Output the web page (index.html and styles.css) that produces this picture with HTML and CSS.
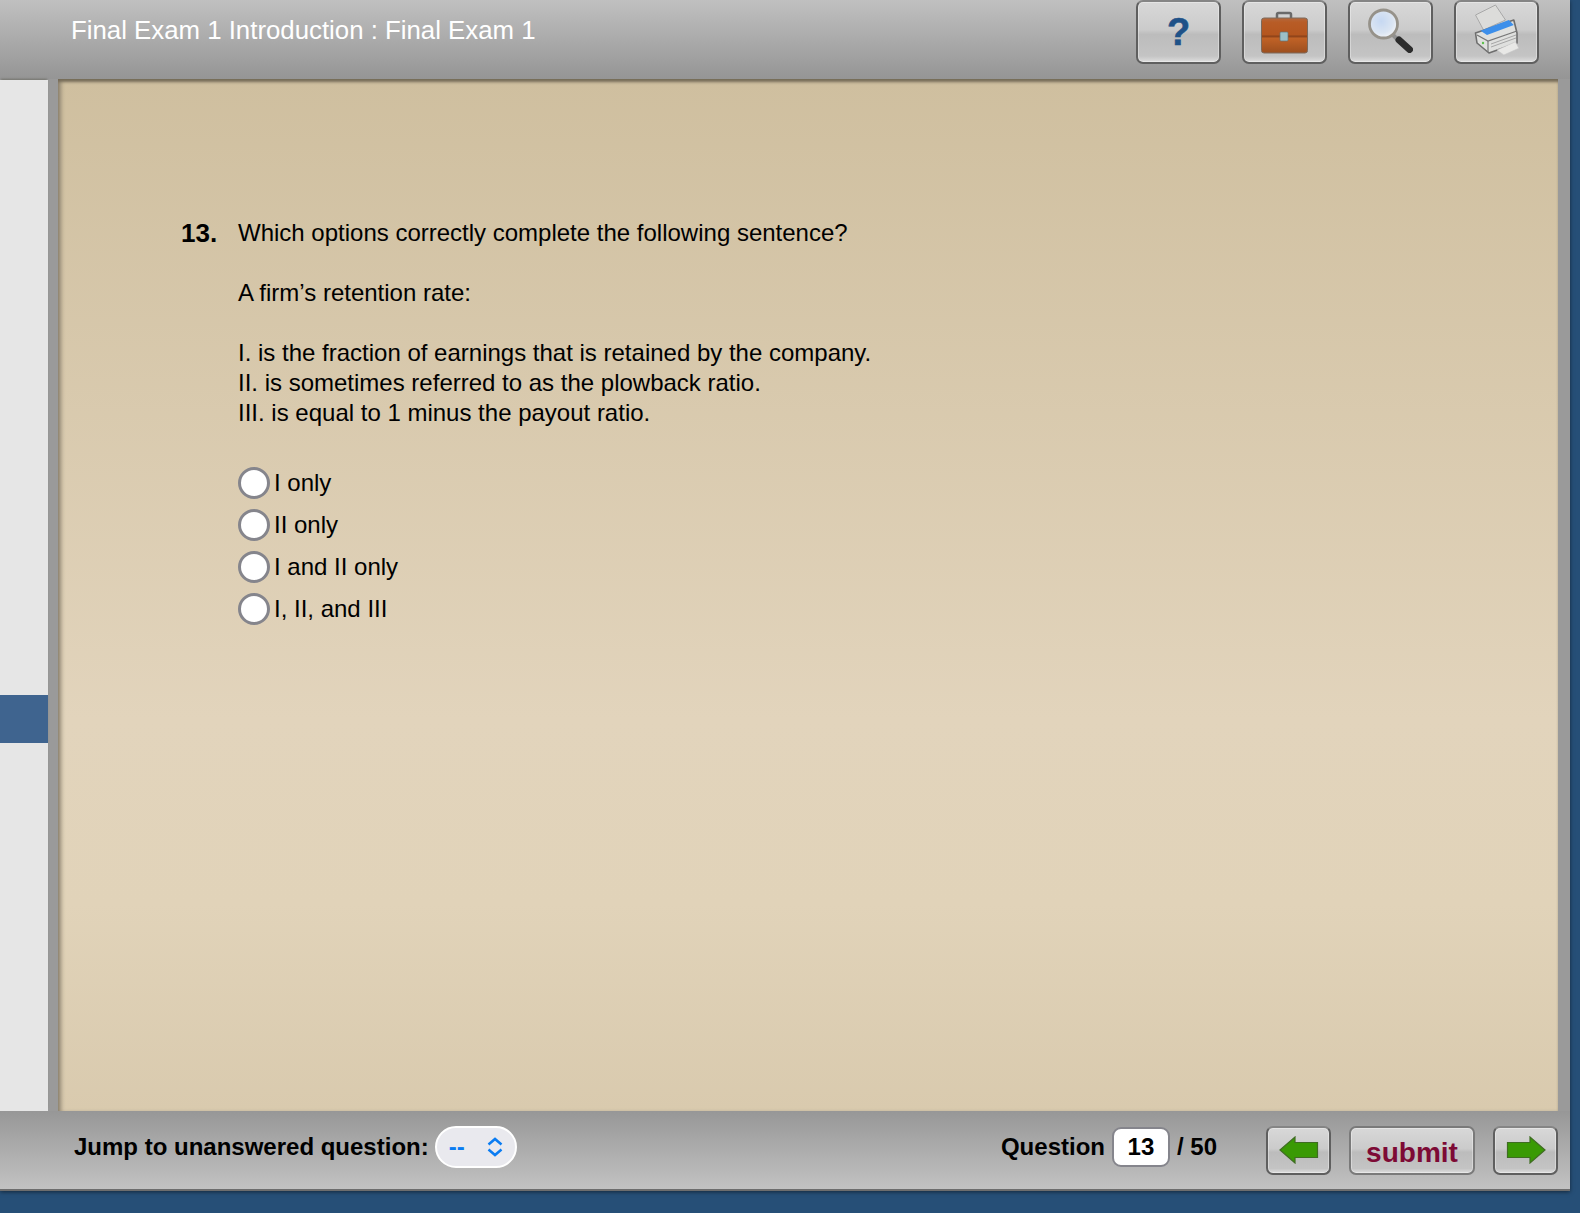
FILE: index.html
```html
<!DOCTYPE html>
<html lang="en">
<head>
<meta charset="utf-8">
<title>Final Exam 1</title>
<link rel="stylesheet" href="styles.css">
</head>
<body>
<div class="shell">
  <header class="topbar">
    <h1 class="title">Final Exam 1 Introduction : Final Exam 1</h1>
    <nav class="tools">
      <button class="tool help" type="button">?</button>
      <button class="tool" type="button" aria-label="Briefcase">
        <svg class="icon" width="50" height="44" viewBox="0 0 50 44">
          <defs>
            <linearGradient id="case" x1="0" y1="0" x2="0" y2="1">
              <stop offset="0" stop-color="#b4693e"/><stop offset=".12" stop-color="#b85c26"/><stop offset=".48" stop-color="#b4561f"/><stop offset=".52" stop-color="#8a4018"/><stop offset=".58" stop-color="#c06226"/><stop offset="1" stop-color="#9c4e1e"/>
            </linearGradient>
          </defs>
          <path d="M17 9V4.500Q17 3 18.500 3H29.500Q31 3 31 4.500V9" fill="none" stroke="#6a6a6a" stroke-width="2.500"/>
          <rect x="1.500" y="8" width="46" height="35" rx="2.500" fill="url(#case)" stroke="#7c6a5c" stroke-width="1"/>
          <rect x="20" y="22" width="8" height="9" rx="1" fill="#9cc0c8" stroke="#5e7478" stroke-width=".7"/>
        </svg>
      </button>
      <button class="tool" type="button" aria-label="Search">
        <svg class="icon" width="50" height="50" viewBox="0 0 50 50">
          <defs>
            <radialGradient id="lens" cx=".42" cy=".4" r=".65">
              <stop offset="0" stop-color="#c6d8f2"/><stop offset=".65" stop-color="#dbe5f2"/><stop offset="1" stop-color="#f6f7f8"/>
            </radialGradient>
          </defs>
          <path d="M27 28L33 34" stroke="#8f8f8f" stroke-width="4"/>
          <path d="M33 33L43.500 42.500" stroke="#2c2c2c" stroke-width="7" stroke-linecap="round"/>
          <circle cx="17.500" cy="17" r="14" fill="url(#lens)" stroke="#96928a" stroke-width="2.800"/>
        </svg>
      </button>
      <button class="tool" type="button" aria-label="Print">
        <svg class="icon" width="50" height="60" viewBox="0 0 50 60">
          <path d="M3.500 13L23.500 3L33.500 18L11.500 28Z" fill="#dcdcda" stroke="#a8a8a8"/>
          <path d="M3.500 31L41.800 18L45 31V41L17 51L5 41Z" fill="#dfe0de" stroke="#6e6e6e" stroke-width="1.600" stroke-linejoin="round"/>
          <path d="M8.500 28.700L36.800 18L41.800 23L15 33Z" fill="#3d8fea"/>
          <path d="M5 33L16 39L45 29" fill="none" stroke="#777" stroke-width="1.200"/>
          <path d="M16 39V50" stroke="#777" stroke-width="1.200"/>
          <path d="M19 42L44 33M19 45L44 36" stroke="#a6a6a6" stroke-width="1"/>
          <path d="M25 48L43.500 39.700L46.800 46.300L31.800 53Z" fill="#e8e8e6" stroke="#c6c6c6" stroke-width=".6"/>
          <circle cx="11" cy="41" r="1.200" fill="#5cc04a"/>
        </svg>
      </button>
    </nav>
  </header>
  <div class="middle">
    <aside class="sidebar">
      <div class="sidebar-tab"></div>
    </aside>
    <main class="panel">
      <div class="question">
        <div class="qnum">13.</div>
        <div class="qbody">
          <p class="para">Which options correctly complete the following sentence?</p>
          <p class="para">A firm’s retention rate:</p>
          <p class="para">I. is the fraction of earnings that is retained by the company.<br>II. is sometimes referred to as the plowback ratio.<br>III. is equal to 1 minus the payout ratio.</p>
          <ul class="options">
            <li class="option"><span class="radio"></span><span>I only</span></li>
            <li class="option"><span class="radio"></span><span>II only</span></li>
            <li class="option"><span class="radio"></span><span>I and II only</span></li>
            <li class="option"><span class="radio"></span><span>I, II, and III</span></li>
          </ul>
        </div>
      </div>
    </main>
  </div>
  <footer class="bottombar">
    <span class="label">Jump to unanswered question:</span>
    <div class="jump">
      <span class="jump-value">--</span>
      <svg width="16" height="20" viewBox="0 0 16 20"><path d="M1.500 7.500L8 2L14.500 7.500M1.500 12.500L8 18L14.500 12.500" fill="none" stroke="#0a7cf2" stroke-width="2.500"/></svg>
    </div>
    <span class="label counter">Question</span>
    <span class="qbox">13</span>
    <span class="label total">/ 50</span>
    <button class="tool nav" type="button" aria-label="Previous">
      <svg class="icon" width="40" height="28" viewBox="0 0 40 28"><path d="M1 14L16 1V6.500H38.500V21.500H16V27Z" fill="#3a9a04" stroke="#3f6d22" stroke-width="1.200"/></svg>
    </button>
    <button class="tool submit" type="button">submit</button>
    <button class="tool nav" type="button" aria-label="Next">
      <svg class="icon" width="40" height="28" viewBox="0 0 40 28"><path d="M39 14L24 1V6.500H1.500V21.500H24V27Z" fill="#3a9a04" stroke="#3f6d22" stroke-width="1.200"/></svg>
    </button>
  </footer>
</div>
</body>
</html>
```
FILE: styles.css
```css
* { box-sizing: border-box; }
html, body { margin: 0; height: 100%; }
body {
  background: #264f77;
  font-family: "Liberation Sans", Arial, sans-serif;
  color: #000;
  overflow: hidden;
}
.shell {
  width: 1570px;
  height: 1191px;
  display: flex;
  flex-direction: column;
  background: #9a9a9a;
  box-shadow: 0 1px 4px rgba(0, 0, 0, .5);
  border-bottom: 2px solid #6d6d6d;
}
.topbar {
  height: 79px;
  flex: none;
  display: flex;
  justify-content: space-between;
  background: linear-gradient(#c0c0c0, #959595);
  padding: 0 31px 0 71px;
}
.title {
  margin: 14px 0 0;
  font-size: 25.8px;
  line-height: 32px;
  font-weight: 400;
  color: #fff;
}
.tools {
  display: flex;
  gap: 21px;
  height: 64px;
}
.tool {
  width: 85px;
  height: 64px;
  padding: 0;
  display: flex;
  align-items: center;
  justify-content: center;
  border: 2px solid #5f5f5f;
  border-top-color: #858585;
  border-radius: 7px;
  background: linear-gradient(#d8d8d8 0, #cbcbcb 46%, #bcbcbc 54%, #c4c4c4 90%, #dedede 100%);
  box-shadow: inset 0 0 0 1px rgba(255, 255, 255, .35);
  font-family: inherit;
}
.icon {
  flex: none;
  filter: blur(.45px);
}
.help {
  font-size: 38px;
  font-weight: 700;
  color: #1f5288;
  line-height: 1;
  -webkit-text-stroke: .6px #1f5288;
}
.middle {
  flex: 1;
  min-height: 0;
  display: flex;
}
.sidebar {
  width: 48px;
  flex: none;
  background: #e6e6e6;
  margin-top: 1px;
  padding-top: 615px;
  box-shadow: 0 -2px 2px -1px rgba(80, 80, 70, .55);
}
.sidebar-tab {
  height: 48px;
  background: #3f648f;
}
.panel {
  flex: 1;
  margin: 0 12px 0 10px;
  background: linear-gradient(#cfbf9f 0, #e2d4bc 62%, #e1d3b9 80%, #d9caae 100%);
  box-shadow: inset 0 4px 3px -1px #756b58, inset 5px 0 4px -2px #8f8572;
  padding: 139px 100px 0 123px;
}
.question {
  display: flex;
}
.qnum {
  width: 57px;
  flex: none;
  font-size: 26px;
  line-height: 30px;
  font-weight: 700;
}
.qbody {
  font-size: 24px;
  line-height: 30px;
}
.para {
  margin: 0 0 30px;
}
.options {
  list-style: none;
  margin: 34px 0 0;
  padding: 0;
  display: flex;
  flex-direction: column;
}
.option {
  height: 42px;
  display: flex;
  align-items: center;
  gap: 4px;
}
.radio {
  width: 32px;
  height: 32px;
  border-radius: 50%;
  background: #fff;
  border: 3px solid #85858c;
  flex: none;
}
.bottombar {
  height: 78px;
  flex: none;
  display: flex;
  align-items: center;
  padding: 0 12px 6px 74px;
  background: linear-gradient(#979797, #c2c2c2);
}
.label {
  font-size: 24px;
  font-weight: 700;
  line-height: 30px;
}
.jump {
  width: 82px;
  height: 42px;
  margin-left: 6px;
  border-radius: 21px;
  background: #e9e9ee;
  border: 2px solid #fff;
  display: flex;
  align-items: center;
  justify-content: space-between;
  padding: 0 12px 0 12px;
}
.jump-value {
  font-size: 24px;
  font-weight: 700;
  color: #0a7cf2;
}
.counter {
  margin-left: auto;
}
.qbox {
  width: 58px;
  height: 40px;
  margin-left: 7px;
  border: 2px solid #85858c;
  border-radius: 9px;
  background: #fff;
  font-size: 24px;
  font-weight: 700;
  display: flex;
  align-items: center;
  justify-content: center;
}
.total {
  margin-left: 7px;
}
.nav {
  width: 65px;
  height: 49px;
  margin-left: 18px;
  margin-top: 6px;
}
.total + .nav {
  margin-left: 49px;
}
.submit {
  width: 126px;
  height: 49px;
  margin-left: 18px;
  margin-top: 6px;
  border-color: #7a7a7a;
  font-size: 28px;
  font-weight: 700;
  color: #7d0a35;
  padding-top: 6px;
}
```
